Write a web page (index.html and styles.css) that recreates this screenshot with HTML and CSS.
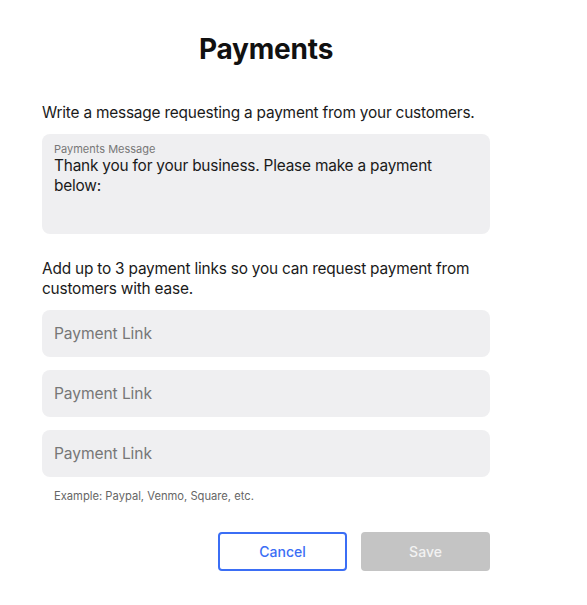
FILE: index.html
```html
<!DOCTYPE html>
<html>
<head>
<meta charset="utf-8">
<link rel="stylesheet" href="styles.css">
</head>
<body>
<div class="panel">
  <h1 class="title">Payments</h1>
  <p class="desc desc-first">Write a message requesting a payment from your customers.</p>
  <div class="message-box">
    <div class="message-label">Payments Message</div>
    <div class="message-text">Thank you for your business. Please make a payment below:</div>
  </div>
  <p class="desc desc-second">Add up to 3 payment links so you can request payment from customers with ease.</p>
  <div class="links">
    <div class="link-input">Payment Link</div>
    <div class="link-input">Payment Link</div>
    <div class="link-input">Payment Link</div>
  </div>
  <div class="hint">Example: Paypal, Venmo, Square, etc.</div>
  <div class="actions">
    <button class="btn btn-cancel">Cancel</button>
    <button class="btn btn-save">Save</button>
  </div>
</div>
</body>
</html>
```
FILE: styles.css
```css
* { box-sizing: border-box; }
body {
  margin: 0;
  background: #ffffff;
  font-family: Inter, "Liberation Sans", sans-serif;
  color: #1a1a1a;
}
.panel {
  width: 448px;
  margin-left: 42px;
  padding-top: 30px;
  display: flex;
  flex-direction: column;
}
.title {
  margin: 0;
  text-align: center;
  font-size: 28px;
  font-weight: 700;
  line-height: 38px;
  color: #111;
  letter-spacing: -0.2px;
}
.desc {
  margin: 0;
  font-size: 15.4px;
  line-height: 20px;
  color: #1a1a1a;
  letter-spacing: -0.2px;
}
.desc-first { margin-top: 35px; }
.message-box {
  margin-top: 11px;
  height: 100px;
  background: #efeff1;
  border-radius: 8px;
  padding: 8px 12px;
}
.message-label {
  font-size: 11px;
  line-height: 14px;
  color: #777;
}
.message-text {
  font-size: 15.4px;
  line-height: 20px;
  color: #1a1a1a;
  letter-spacing: -0.2px;
}
.desc-second { margin-top: 25px; }
.links {
  margin-top: 11px;
  display: flex;
  flex-direction: column;
  gap: 13px;
}
.link-input {
  height: 47px;
  background: #efeff1;
  border-radius: 8px;
  padding: 0 12px;
  display: flex;
  align-items: center;
  font-size: 15.6px;
  color: #777;
  letter-spacing: -0.1px;
}
.hint {
  margin-top: 12px;
  padding-left: 12px;
  font-size: 11.2px;
  line-height: 14px;
  color: #666;
}
.actions {
  margin-top: 29px;
  display: flex;
  justify-content: flex-end;
  gap: 14px;
}
.btn {
  width: 129px;
  height: 39px;
  border-radius: 4px;
  font-family: Inter, "Liberation Sans", sans-serif;
  font-size: 14px;
  font-weight: 500;
  cursor: pointer;
}
.btn-cancel {
  background: #fff;
  border: 2px solid #3b6ef5;
  color: #3b6ef5;
}
.btn-save {
  background: #c4c4c4;
  border: none;
  color: #f2f2f2;
}
```
